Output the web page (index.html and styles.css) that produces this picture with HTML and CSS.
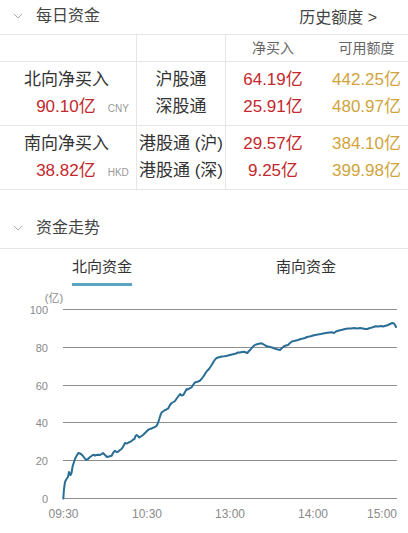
FILE: index.html
```html
<!DOCTYPE html>
<html lang="zh-CN">
  <head>
    <meta charset="UTF-8" />
    <meta name="viewport" content="width=device-width, initial-scale=1.0" />
    <title>每日资金</title>
    <link rel="stylesheet" href="styles.css">
  </head>
  <body>
    <!-- 每日资金 -->
    <section class="panel">
      <div class="panel-head top">
        <svg class="chevron" width="10" height="6" viewBox="0 0 10 6"><path d="M1 1 L5 5 L9 1" /></svg>
        <h2>每日资金</h2>
        <a class="more" href="#">历史额度 &gt;</a>
      </div>

      <div class="flow-table">
        <div class="cell th"></div>
        <div class="cell th"></div>
        <div class="cell th">净买入</div>
        <div class="cell th quota">可用额度</div>

        <div class="cell total">
          <p>北向净买入</p>
          <p class="total-num"><span class="red">90.10亿</span><span class="unit">CNY</span></p>
        </div>
        <div class="cell name"><p>沪股通</p><p>深股通</p></div>
        <div class="cell red"><p>64.19亿</p><p>25.91亿</p></div>
        <div class="cell gold quota"><p>442.25亿</p><p>480.97亿</p></div>

        <div class="cell total">
          <p>南向净买入</p>
          <p class="total-num"><span class="red">38.82亿</span><span class="unit">HKD</span></p>
        </div>
        <div class="cell name"><p>港股通 (沪)</p><p>港股通 (深)</p></div>
        <div class="cell red"><p>29.57亿</p><p>9.25亿</p></div>
        <div class="cell gold quota"><p>384.10亿</p><p>399.98亿</p></div>
      </div>
    </section>

    <!-- 资金走势 -->
    <section class="panel trend">
      <div class="panel-head">
        <svg class="chevron" width="10" height="6" viewBox="0 0 10 6"><path d="M1 1 L5 5 L9 1" /></svg>
        <h2>资金走势</h2>
      </div>

      <div class="tabs">
        <div class="tab active"><span>北向资金</span></div>
        <div class="tab"><span>南向资金</span></div>
      </div>

      <svg class="chart" width="408" height="243" viewBox="0 290 408 243">
        <g class="grid">
          <line x1="63" y1="310.5" x2="397" y2="310.5" />
          <line x1="63" y1="348.5" x2="397" y2="348.5" />
          <line x1="63" y1="386.5" x2="397" y2="386.5" />
          <line x1="63" y1="423.5" x2="397" y2="423.5" />
          <line x1="63" y1="461.5" x2="397" y2="461.5" />
          <line x1="63" y1="499.5" x2="397" y2="499.5" />
        </g>
        <g class="y-axis">
          <text x="54" y="303" class="unit-label">(亿)</text>
          <text x="48" y="315">100</text>
          <text x="48" y="353">80</text>
          <text x="48" y="391">60</text>
          <text x="48" y="428">40</text>
          <text x="48" y="466">20</text>
          <text x="48" y="504">0</text>
        </g>
        <g class="x-axis">
          <text x="63.5" y="519">09:30</text>
          <text x="147" y="519">10:30</text>
          <text x="230" y="519">13:00</text>
          <text x="313" y="519">14:00</text>
          <text x="397" y="519" class="last">15:00</text>
        </g>
        <!-- 北向资金 分时累计 -->
        <polyline class="flow-line" points="
          63.3,499.5 64,490 65,483 66.5,480 68,478 69,473 70.5,476 71.5,474 72.7,467 74,463
          75,460 76.5,457 78.3,454 80,454.5 81,455 83,457 84.5,459 86,461 88,460 90,458
          91.5,457 93.3,455.7 95,456.5 96.5,456 98,455.7 100,456 101.5,455 103,454 104.5,455.5 106,457
          107,458 109,457.5 110.5,457 111.7,456.7 113,454 115,451.7 116.5,453 118,452.7 120,451 121.5,450
          122.7,448.3 124,446 125,444 127,444.5 128.5,443.5 130,443 131.5,442 133,440.7 134.5,440 135.5,437
          136.7,436 138,437 139,438.5 140,438 141.5,437 143,436 144,435 146,433 148.3,430.7 150,430
          151.5,429.5 153.3,428.7 155,428 156.7,426.7 158,424 159.3,420 160.5,416 161.7,413.3 163,412.5 165,411
          166.5,410.5 168.3,409.3 170,406 171.7,404 173.5,403 175,402 177,399 178.5,397 180,395 181.5,396.5
          183.3,396 185,393 186.7,390 188,390.5 190,389 191.7,388.3 193,386 195,383.3 196.5,383 198,382.5
          200,381.7 201.5,380 203,378 204,376.7 205.5,374 207,372 209,370 211,367 212.3,365 214,362
          215.5,360 216.7,359 218,358.5 220,358 222,357.5 224,357.3 226,357 228,356.5 230,356 232,355.5
          234,355 236,354.5 238,353.5 240,353.5 242,353 244,352.7 246,353.5 247.3,354 249,352 251,350
          252.5,348 254,346.7 256,345.5 258,345 260,344.5 261.3,344.3 263,345 265.7,346.7 268,347.5 270,348
          272,348.5 274,349.3 276,350 278,350.5 280,351 282,349 284,347.3 286,346.5 288,346 290,344
          292.3,342.3 294,342 296,341.5 298,341 300.7,340 303,339.5 305,339 307,338 310.7,337.3 313,336.5
          315,336 318,335.5 320.7,335 323,334.5 326,334 329,333.5 332.3,333.3 334,334 336,332.5 339,331.5
          342.3,330.7 345,330 348,329.5 351,329.5 354,329 357,329.5 360,329 363,329.5 365,330 367.3,330
          370,329 372,328.5 375.7,327.3 378,327.5 381,327 383,327.5 385.7,326.7 388,326 390,325 392.3,324
          394,324.5 395,326 396,328" />
      </svg>
    </section>
  </body>
</html>
```

FILE: styles.css
```css
* {
  margin: 0;
  padding: 0;
  box-sizing: border-box;
}
html,
body {
  font-family: "Liberation Sans", "Noto Sans CJK SC", sans-serif;
  font-size: 16px;
  color: #333;
  background-color: #fff;
}
a {
  text-decoration: none;
  color: #333;
}
.panel-head {
  display: flex;
  align-items: center;
  height: 41px;
  padding-left: 13px;
  border-bottom: 1px solid #e6e6e6;
}
.panel-head.top {
  height: 35px;
  padding-bottom: 3px;
}
.panel-head h2 {
  margin-left: 13px;
  font-size: 16px;
  font-weight: normal;
  color: #444;
  line-height: 20px;
}
.chevron {
  fill: none;
  stroke: #aaa;
  stroke-width: 1;
}
.panel-head .more {
  margin-left: auto;
  margin-right: 31px;
  font-size: 16px;
  color: #444;
}
.flow-table {
  display: grid;
  grid-template-columns: 137px 89px 94px 88px;
}
.cell {
  height: 64px;
  border-bottom: 1px solid #e6e6e6;
  text-align: center;
  font-size: 17px;
  padding: 4px 0 0;
}
.cell p {
  height: 27px;
  line-height: 27px;
  white-space: nowrap;
}
.cell:nth-child(4n + 1),
.cell:nth-child(4n + 2) {
  border-right: 1px solid #e6e6e6;
}
.cell.th {
  padding: 0;
  height: 27px;
  line-height: 26px;
  font-size: 14px;
  color: #666;
}
.cell.quota {
  padding-left: 5px;
}
.cell.total {
  padding-right: 3px;
}
.total-num {
  padding-left: 32px;
}
.unit {
  margin-left: 12px;
  font-size: 10px;
  color: #999;
}
.red {
  color: #c3282c;
}
.gold {
  color: #d1a43c;
}
.trend {
  margin-top: 18px;
}
.tabs {
  display: flex;
  height: 40px;
}
.tab {
  flex: 1;
  text-align: center;
  padding-top: 7px;
  font-size: 15px;
  color: #333;
}
.tab span {
  display: inline-block;
  height: 30px;
  line-height: 22px;
  padding-bottom: 5px;
  border-bottom: 3px solid transparent;
}
.tab.active span {
  border-bottom-color: #5ba5c1;
}
.chart {
  display: block;
}
.grid line {
  stroke: #8e8e8e;
  stroke-width: 1;
}
.chart text {
  font-family: "Liberation Sans", "Noto Sans CJK SC", sans-serif;
  fill: #8a8a8a;
}
.y-axis text {
  font-size: 11px;
  text-anchor: end;
}
.y-axis .unit-label {
  text-anchor: middle;
}
.x-axis text {
  font-size: 12px;
  text-anchor: middle;
}
.x-axis .last {
  text-anchor: end;
}
.flow-line {
  fill: none;
  stroke: #2a6e96;
  stroke-width: 2;
  stroke-linejoin: round;
  stroke-linecap: round;
}
```
